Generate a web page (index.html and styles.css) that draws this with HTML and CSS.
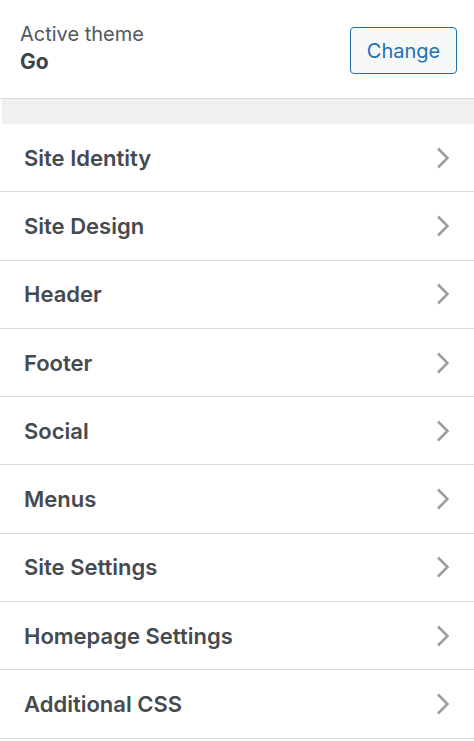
FILE: index.html
```html
<!DOCTYPE html>
<html>
<head>
<meta charset="utf-8">
<link rel="stylesheet" href="styles.css">
</head>
<body>
<div class="panel">
  <div class="theme">
    <div class="theme-info">
      <div class="theme-label">Active theme</div>
      <div class="theme-name">Go</div>
    </div>
    <button class="change-btn">Change</button>
  </div>
  <div class="spacer"></div>
  <ul class="sections">
    <li class="section"><span>Site Identity</span><svg class="chev" viewBox="0 0 16 24"><path d="M4 2.5 L13.5 12 L4 21.5"/></svg></li>
    <li class="section"><span>Site Design</span><svg class="chev" viewBox="0 0 16 24"><path d="M4 2.5 L13.5 12 L4 21.5"/></svg></li>
    <li class="section"><span>Header</span><svg class="chev" viewBox="0 0 16 24"><path d="M4 2.5 L13.5 12 L4 21.5"/></svg></li>
    <li class="section"><span>Footer</span><svg class="chev" viewBox="0 0 16 24"><path d="M4 2.5 L13.5 12 L4 21.5"/></svg></li>
    <li class="section"><span>Social</span><svg class="chev" viewBox="0 0 16 24"><path d="M4 2.5 L13.5 12 L4 21.5"/></svg></li>
    <li class="section"><span>Menus</span><svg class="chev" viewBox="0 0 16 24"><path d="M4 2.5 L13.5 12 L4 21.5"/></svg></li>
    <li class="section"><span>Site Settings</span><svg class="chev" viewBox="0 0 16 24"><path d="M4 2.5 L13.5 12 L4 21.5"/></svg></li>
    <li class="section"><span>Homepage Settings</span><svg class="chev" viewBox="0 0 16 24"><path d="M4 2.5 L13.5 12 L4 21.5"/></svg></li>
    <li class="section"><span>Additional CSS</span><svg class="chev" viewBox="0 0 16 24"><path d="M4 2.5 L13.5 12 L4 21.5"/></svg></li>
  </ul>
</div>
</body>
</html>
```
FILE: styles.css
```css
html, body {
  margin: 0;
  padding: 0;
  background: #ffffff;
}
body {
  font-family: Inter, "Liberation Sans", Arial, sans-serif;
  -webkit-font-smoothing: antialiased;
}
.panel {
  width: 474px;
}
.theme {
  height: 99px;
  box-sizing: border-box;
  display: flex;
  align-items: center;
  justify-content: space-between;
  padding: 0 17px 0 20px;
  border-bottom: 1.5px solid #dcdcde;
}
.theme-info {
  display: flex;
  flex-direction: column;
  margin-top: -2px;
}
.theme-label {
  font-size: 20px;
  line-height: 27px;
  color: #50575e;
}
.theme-name {
  font-size: 21px;
  line-height: 27px;
  font-weight: 700;
  color: #3c434a;
}
.change-btn {
  width: 107px;
  height: 47px;
  box-sizing: border-box;
  border: 1.5px solid #2271b1;
  border-radius: 4px;
  background: #f6f7f7;
  color: #2271b1;
  font-family: inherit;
  font-size: 20px;
  padding: 0;
  margin-top: 3px;
}
.spacer {
  height: 25px;
  background: #f0f0f1;
  margin-left: 2px;
}
.sections {
  list-style: none;
  margin: 0;
  padding: 0;
}
.section {
  height: 67.3px;
  box-sizing: content-box;
  border-bottom: 1.5px solid #dcdcde;
  display: flex;
  align-items: center;
  justify-content: space-between;
  padding: 0 24px 0 24px;
  font-size: 22px;
  font-weight: 600;
  color: #454a50;
}
.chev {
  width: 16px;
  height: 24px;
  margin-right: 0;
}
.chev path {
  fill: none;
  stroke: #9a9da1;
  stroke-width: 2.5;
}
```
